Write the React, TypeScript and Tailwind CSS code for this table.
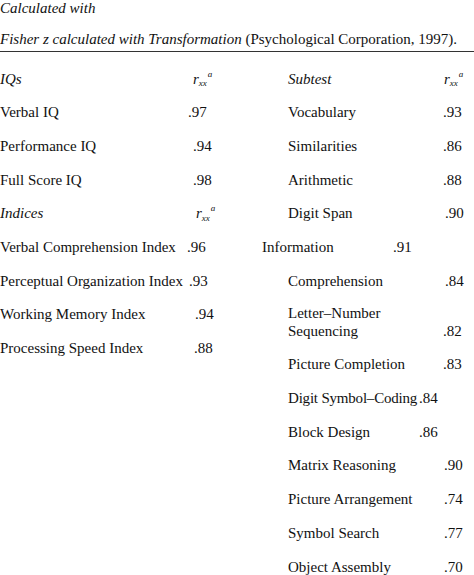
import React from 'react';

function Rxx() {
  return (
    <span className="whitespace-nowrap">
      <span className="italic">r</span>
      <sub className="italic text-[9px]">xx</sub>
      <sup className="italic text-[9px] relative top-[-7px] left-[1px]">a</sup>
    </span>
  );
}

function Row({
  label,
  value,
  labelClass,
  indent = false,
}: {
  label: React.ReactNode;
  value: React.ReactNode;
  labelClass: string;
  indent?: boolean;
}) {
  return (
    <div className={`flex items-center h-[33.7px] ${indent ? 'pl-[26px]' : ''}`}>
      <div className={`shrink-0 whitespace-nowrap ${labelClass}`}>{label}</div>
      <div className="whitespace-nowrap">{value}</div>
    </div>
  );
}

export default function App() {
  return (
    <div
      className="w-[474px] h-[575px] overflow-hidden bg-white text-[#111] text-[15px]"
      style={{ fontFamily: '"Liberation Serif", "Times New Roman", serif' }}
    >
      {/* Caption */}
      <div className="leading-[17px] italic">Calculated with</div>
      <div className="leading-[12px] mt-[16px] pb-[6px] border-b-[1.5px] border-[#333] whitespace-nowrap">
        <span className="italic">Fisher z calculated with Transformation</span> (Psychological Corporation, 1997).
      </div>

      {/* Table body */}
      <div className="flex mt-[10px]">
        {/* Left column */}
        <div className="w-[262px] shrink-0">
          <Row label={<span className="italic">IQs</span>} value={<Rxx />} labelClass="w-[193px]" />
          <Row label="Verbal IQ" value=".97" labelClass="w-[188px]" />
          <Row label="Performance IQ" value=".94" labelClass="w-[193px]" />
          <Row label="Full Score IQ" value=".98" labelClass="w-[193px]" />
          <Row label={<span className="italic">Indices</span>} value={<Rxx />} labelClass="w-[196px]" />
          <Row label="Verbal Comprehension Index" value=".96" labelClass="w-[187px]" />
          <Row label="Perceptual Organization Index" value=".93" labelClass="w-[189px]" />
          <Row label="Working Memory Index" value=".94" labelClass="w-[195px]" />
          <Row label="Processing Speed Index" value=".88" labelClass="w-[194px]" />
        </div>

        {/* Right column */}
        <div className="flex-1">
          <Row indent label={<span className="italic">Subtest</span>} value={<Rxx />} labelClass="w-[156px]" />
          <Row indent label="Vocabulary" value=".93" labelClass="w-[155px]" />
          <Row indent label="Similarities" value=".86" labelClass="w-[155px]" />
          <Row indent label="Arithmetic" value=".88" labelClass="w-[155px]" />
          <Row indent label="Digit Span" value=".90" labelClass="w-[157px]" />
          <Row label="Information" value=".91" labelClass="w-[131px]" />
          <Row indent label="Comprehension" value=".84" labelClass="w-[157px]" />

          {/* two-line label */}
          <div className="flex items-center h-[50px] pl-[26px]">
            <div className="shrink-0 w-[155px] leading-[17.5px] whitespace-nowrap">
              Letter–Number
              <br />
              Sequencing
            </div>
            <div className="leading-[17.5px] pt-[17.5px]">.82</div>
          </div>

          <Row indent label="Picture Completion" value=".83" labelClass="w-[155px]" />
          <Row indent label="Digit Symbol–Coding" value=".84" labelClass="w-[131px] tracking-[-0.2px]" />
          <Row indent label="Block Design" value=".86" labelClass="w-[131px]" />
          <Row indent label="Matrix Reasoning" value=".90" labelClass="w-[156px]" />
          <Row indent label="Picture Arrangement" value=".74" labelClass="w-[156px]" />
          <Row indent label="Symbol Search" value=".77" labelClass="w-[156px]" />
          <Row indent label="Object Assembly" value=".70" labelClass="w-[156px]" />
        </div>
      </div>
    </div>
  );
}
